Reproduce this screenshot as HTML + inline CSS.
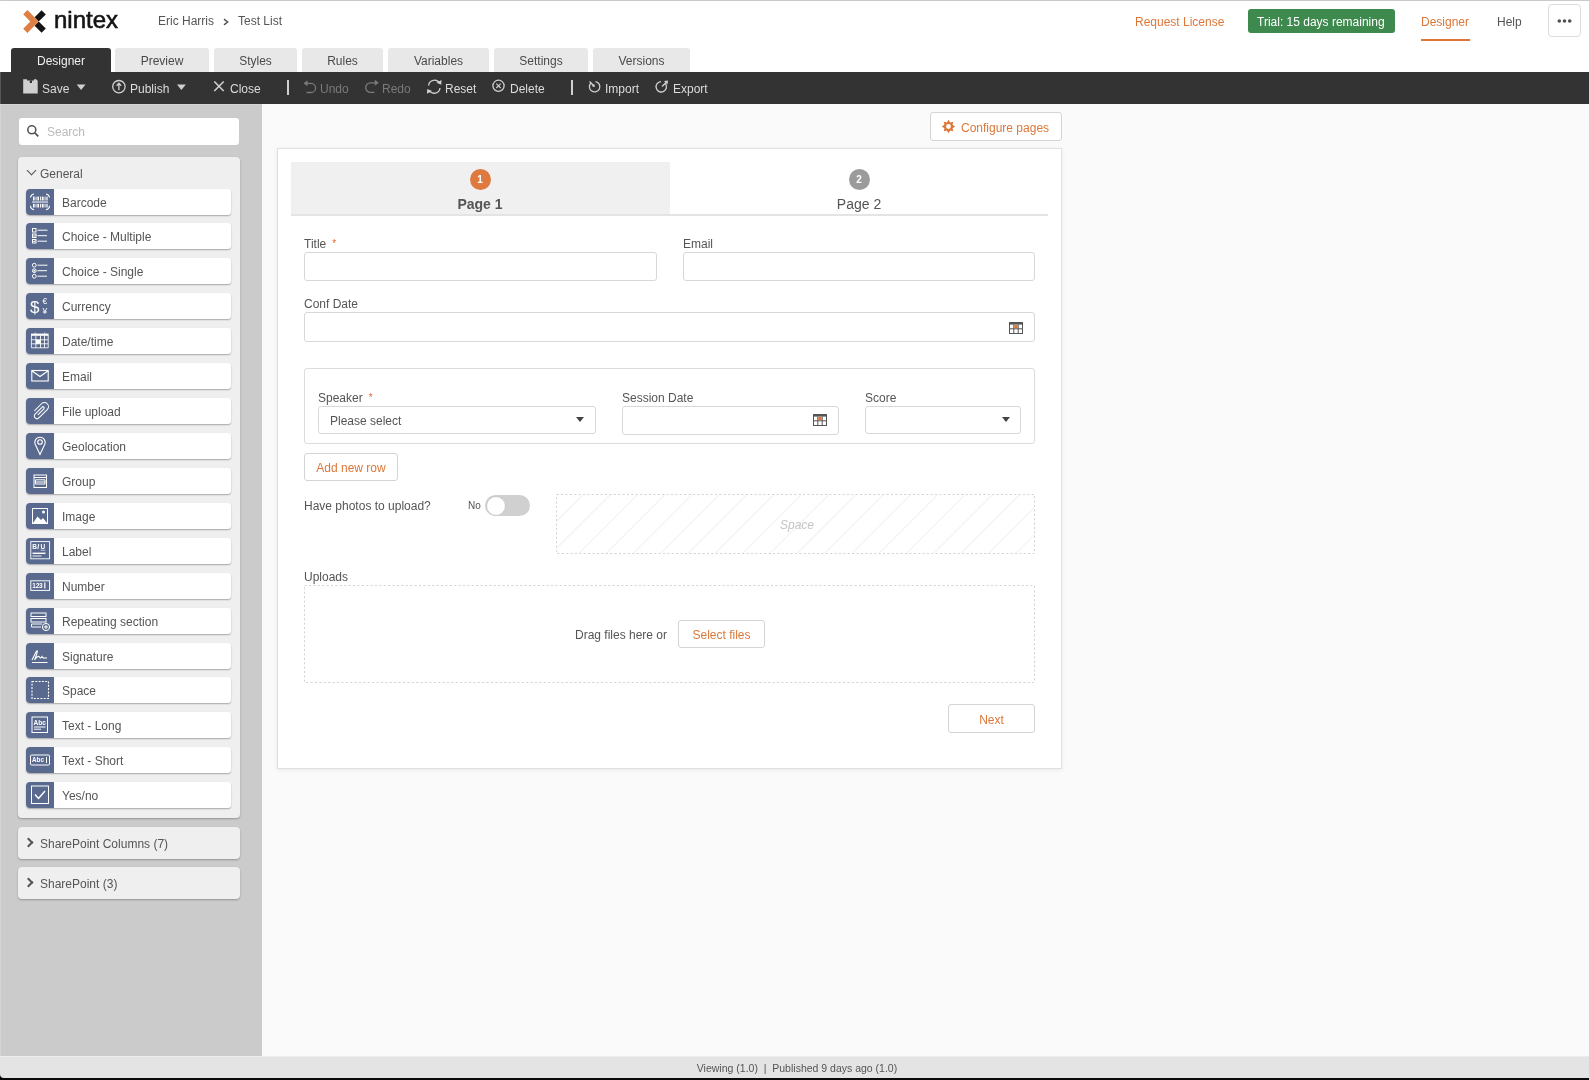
<!DOCTYPE html>
<html><head><meta charset="utf-8">
<style>
*{box-sizing:border-box;margin:0;padding:0}
html,body{width:1589px;height:1080px;overflow:hidden;background:#fafafa;font-family:"Liberation Sans",sans-serif;font-size:12px;color:#555}
.a{position:absolute}
.t{position:absolute;white-space:nowrap;line-height:14px;height:14px}
#topline{left:0;top:0;width:1589px;height:1px;background:#c9c9c9}
#header{left:0;top:1px;width:1589px;height:71px;background:#fff}
.tab{position:absolute;top:48px;height:24px;background:#e8e8e8;border-radius:3px 3px 0 0;text-align:center;line-height:27px;color:#4a4a4a;font-size:12px}
.tab.on{background:#333;color:#f0f0f0}
#toolbar{left:0;top:72px;width:1589px;height:32px;background:#333}
.tb{position:absolute;top:82px;height:14px;line-height:14px;color:#dcdcdc;font-size:12px;white-space:nowrap}
.tb.dis{color:#7a7a7a}
#sidebar{left:0;top:104px;width:262px;height:952px;background:#cbcbcb}
#footer{left:0;top:1056px;width:1589px;height:22px;padding-left:5px;background:#e4e4e4;border-top:1px solid #ececec;border-radius:0 0 0 4px;text-align:center;line-height:22px;font-size:10.5px;color:#555}
#bottom{left:0;top:1070px;width:1589px;height:10px;background:#0a0a0a}

.panel{position:absolute;left:18px;width:222px;background:#efefef;border-radius:4px;box-shadow:0 1px 2px rgba(0,0,0,.28)}
.item{position:absolute;left:26px;width:205px;height:26px;background:#fff;border-radius:4px 3px 3px 4px;box-shadow:0 1px 1.5px rgba(0,0,0,.3);overflow:hidden}
.item .ic{position:absolute;left:0;top:0;width:28px;height:26px;background:#596a8e}
.item span{position:absolute;left:36px;top:7px;line-height:14px;color:#555;font-size:12px;white-space:nowrap}
.chev{position:absolute;width:7px;height:7px;border-right:1.7px solid #555;border-bottom:1.7px solid #555}

.inp{position:absolute;background:#fff;border:1px solid #d8d8d8;border-radius:3px}
.lbl{position:absolute;white-space:nowrap;line-height:14px;height:14px;color:#555;font-size:12px}
.req{color:#dc6a2c;font-size:10px;margin-left:6px;position:relative;top:-1.5px}
.btn{position:absolute;background:#fff;border:1px solid #d4d4d4;border-radius:3px;color:#dc7738;font-size:12px;text-align:center;white-space:nowrap}
.caret{position:absolute;width:0;height:0;border-left:4.5px solid transparent;border-right:4.5px solid transparent;border-top:5px solid #444}
</style></head><body><div id="wrap" style="position:absolute;left:0;top:0;width:1589px;height:1080px;will-change:transform">
<div class="a" id="topline"></div>
<div class="a" id="header"></div>

<!-- logo -->
<svg class="a" style="left:0;top:0" width="50" height="40" viewBox="0 0 50 40">
  <path d="M41.6 10.3 L45.8 14.5 L38.7 21.5 L34.6 17.3 Z" fill="#141414"/>
  <path d="M41.6 32.7 L45.8 28.5 L38.7 21.5 L34.6 25.7 Z" fill="#141414"/>
  <path d="M27.4 10.1 L38.7 21.5 L27.4 32.9 L23.2 28.7 L30.3 21.5 L23.2 14.3 Z" fill="#de8046"/>
</svg>
<div class="t" style="left:54px;top:6px;font-size:24px;line-height:28px;height:28px;color:#141414;-webkit-text-stroke:0.6px #141414">nintex</div>

<div class="t" style="left:158px;top:14px;color:#555">Eric Harris</div>
<svg class="a" style="left:222px;top:18px" width="8" height="8" viewBox="0 0 8 8"><path d="M2 1.2 L5.6 4 L2 6.8" fill="none" stroke="#555" stroke-width="1.5"/></svg>
<div class="t" style="left:238px;top:14px;color:#555">Test List</div>

<div class="t" style="left:1135px;top:15px;color:#dc7738">Request License</div>
<div class="a" style="left:1248px;top:9px;width:147px;height:24px;background:#3e8a4e;border-radius:3px"></div>
<div class="t" style="left:1257px;top:15px;color:#fff">Trial: 15 days remaining</div>
<div class="t" style="left:1421px;top:15px;color:#dc7738">Designer</div>
<div class="a" style="left:1421px;top:39px;width:49px;height:2px;background:#dc7738"></div>
<div class="t" style="left:1497px;top:15px;color:#555">Help</div>
<div class="a" style="left:1548px;top:4px;width:33px;height:33px;border:1px solid #ddd;border-radius:4px;background:#fff"></div>
<svg class="a" style="left:1550px;top:14px" width="30" height="14" viewBox="0 0 30 14"><circle cx="9.3" cy="7" r="1.8" fill="#505050"/><circle cx="14.5" cy="7" r="1.8" fill="#505050"/><circle cx="19.7" cy="7" r="1.8" fill="#505050"/></svg>

<!-- tabs -->
<div class="tab on" style="left:11px;width:100px">Designer</div>
<div class="tab" style="left:115px;width:94px">Preview</div>
<div class="tab" style="left:214px;width:83px">Styles</div>
<div class="tab" style="left:302px;width:81px">Rules</div>
<div class="tab" style="left:388px;width:101px">Variables</div>
<div class="tab" style="left:494px;width:94px">Settings</div>
<div class="tab" style="left:593px;width:97px">Versions</div>

<div class="a" id="toolbar"></div>
<svg class="a" style="left:0;top:72px" width="720" height="32" viewBox="0 72 720 32">
<g fill="#d0d0d0">
 <path d="M23.2 79.2 H27 V80.4 H34 V79.2 H36.2 L37.7 80.7 V93.5 H23.2 Z"/>
 <rect x="29.8" y="80.4" width="2.2" height="2.6" fill="#333"/>
 <path d="M76.7 84.4 H85.5 L81.1 89.9 Z"/>
 <path d="M177 84.4 H185.8 L181.4 89.9 Z"/>
</g>
<g fill="none" stroke="#d0d0d0" stroke-width="1.3">
 <circle cx="118.9" cy="86.7" r="6.2"/>
 <path d="M118.9 90.3 V83.5 M116.6 85.8 L118.9 83.3 L121.2 85.8"/>
 <path d="M214.3 81.5 L223.7 91 M223.7 81.5 L214.3 91" stroke-width="1.6"/>
 <circle cx="498.5" cy="85.8" r="5.6"/>
 <path d="M496.3 83.6 L500.7 88 M500.7 83.6 L496.3 88" stroke-width="1.1"/>
 <path d="M589.5 81.5 L594.3 86.3"/>
 <path d="M591 83 A5.2 5.2 0 1 0 595.5 81.6"/>
 <path d="M667 81.5 L662 86.5"/>
 <path d="M665.3 83.5 A5.2 5.2 0 1 1 661 81.6"/>
 <path d="M428.6 85.5 A5.8 5.8 0 0 1 439.5 83.3"/>
 <path d="M440 88 A5.8 5.8 0 0 1 429.2 90.3"/>
</g>
<g fill="#d0d0d0">
 <path d="M594.9 87 L591.8 86.2 L594.1 83.8 Z"/>
 <path d="M668 80.5 L667.5 84.6 L664 81 Z"/>
 <path d="M436.5 82.8 L441.3 84.8 L441.5 80 Z"/>
 <path d="M432 91 L427.2 89 L427 93.7 Z"/>
 <rect x="287" y="80" width="2" height="15" fill="#cfcfcf"/>
 <rect x="571" y="80" width="2" height="15" fill="#cfcfcf"/>
</g>
<g fill="none" stroke="#7a7a7a" stroke-width="1.3">
 <path d="M306 83.3 H311 A4.6 4.6 0 0 1 311 92.5 H306.5"/>
 <path d="M375.5 82.8 H370.5 A4.8 4.8 0 0 0 370.5 92.4 H374.5"/>
</g>
<g fill="#7a7a7a">
 <path d="M303.5 83.3 L307.5 80.3 V86.3 Z"/>
 <path d="M378.8 82.8 L374.8 79.8 V85.8 Z"/>
</g>
</svg>
<div class="tb" style="left:42px">Save</div>
<div class="tb" style="left:130px">Publish</div>
<div class="tb" style="left:230px">Close</div>
<div class="tb dis" style="left:320px">Undo</div>
<div class="tb dis" style="left:382px">Redo</div>
<div class="tb" style="left:445px">Reset</div>
<div class="tb" style="left:510px">Delete</div>
<div class="tb" style="left:605px">Import</div>
<div class="tb" style="left:673px">Export</div>

<div class="a" id="sidebar"></div>
<div class="a" style="left:19px;top:118px;width:220px;height:27px;background:#fff;border-radius:3px"></div>
<svg class="a" style="left:26px;top:124px" width="14" height="14" viewBox="0 0 14 14"><circle cx="5.8" cy="5.8" r="4" fill="none" stroke="#555" stroke-width="1.6"/><path d="M8.8 8.8 L12.3 12.3" stroke="#555" stroke-width="1.8"/></svg>
<div class="t" style="left:47px;top:125px;color:#bbb">Search</div>
<div class="panel" style="top:157px;height:661px"></div>
<div class="chev" style="left:28px;top:167px;transform:rotate(45deg)"></div>
<div class="t" style="left:40px;top:167px;color:#555">General</div>
<div class="item" style="top:188.5px"><svg class="ic" width="28" height="26" viewBox="0 0 28 26"><g fill="none" stroke="#fff" stroke-width="1.1">
<path d="M4.5 8.5 A4 4 0 0 1 8 5"/><path d="M20 5 A4 4 0 0 1 23.5 8.5"/>
<path d="M4.5 16.8 A4 4 0 0 0 8 20.6"/><path d="M20 20.6 A4 4 0 0 0 23.5 16.8"/>
<path d="M6 13 H22"/></g>
<g fill="#fff"><rect x="7" y="7.6" width="1.6" height="3.9"/><rect x="9.6" y="7.6" width="0.9" height="3.9"/><rect x="11.4" y="7.6" width="1.6" height="3.9"/><rect x="14" y="7.6" width="0.9" height="3.9"/><rect x="15.8" y="7.6" width="1.8" height="3.9"/><rect x="18.6" y="7.6" width="0.9" height="3.9"/><rect x="20.4" y="7.6" width="1.2" height="3.9"/>
<rect x="7" y="14.8" width="1.6" height="3.7"/><rect x="9.6" y="14.8" width="0.9" height="3.7"/><rect x="11.4" y="14.8" width="1.6" height="3.7"/><rect x="14" y="14.8" width="0.9" height="3.7"/><rect x="15.8" y="14.8" width="1.8" height="3.7"/><rect x="18.6" y="14.8" width="0.9" height="3.7"/><rect x="20.4" y="14.8" width="1.2" height="3.7"/></g></svg><span>Barcode</span></div>
<div class="item" style="top:223.4px"><svg class="ic" width="28" height="26" viewBox="0 0 28 26"><g fill="none" stroke="#fff" stroke-width="1"><rect x="6.5" y="5.5" width="3.5" height="3.5"/><rect x="6.5" y="11" width="3.5" height="3.5"/><rect x="6.5" y="16.5" width="3.5" height="3.5"/>
<path d="M11.5 7.2 H21.5 M11.5 12.7 H21 M11.5 18.2 H21"/><path d="M7.3 12.5 L8.2 13.5 L9.6 11.6 M7.3 18 L8.2 19 L9.6 17.1" stroke-width="0.9"/></g></svg><span>Choice - Multiple</span></div>
<div class="item" style="top:258.3px"><svg class="ic" width="28" height="26" viewBox="0 0 28 26"><g fill="none" stroke="#fff" stroke-width="1"><circle cx="8.3" cy="7.2" r="1.9"/><circle cx="8.3" cy="12.7" r="1.9"/><circle cx="8.3" cy="18.2" r="1.9"/>
<path d="M11.5 7.2 H21.5 M11.5 12.7 H21 M11.5 18.2 H21"/></g><circle cx="8.3" cy="12.7" r="1" fill="#fff"/></svg><span>Choice - Single</span></div>
<div class="item" style="top:293.3px"><svg class="ic" width="28" height="26" viewBox="0 0 28 26"><text x="4" y="20" font-family="Liberation Sans" font-size="17" fill="#fff">$</text><text x="16.5" y="11" font-family="Liberation Sans" font-size="8.5" fill="#fff">€</text><text x="16.5" y="20.5" font-family="Liberation Sans" font-size="8.5" fill="#fff">¥</text></svg><span>Currency</span></div>
<div class="item" style="top:328.2px"><svg class="ic" width="28" height="26" viewBox="0 0 28 26"><rect x="5" y="5.6" width="17.6" height="2.2" fill="#fff"/><path d="M9.2 4.3 L10 5.8 H8.4 Z M18.6 4.3 L19.4 5.8 H17.8 Z" fill="#fff"/><g fill="none" stroke="#fff" stroke-width="0.85"><path d="M5.4 7.5 V19.8 H22.2 V7.5 M5.4 11.8 H22.2 M5.4 15.8 H22.2 M9.9 7.5 V19.8 M14.5 7.5 V19.8 M18.5 7.5 V19.8"/></g><rect x="9.9" y="11.8" width="4.6" height="4" fill="#fff"/></svg><span>Date/time</span></div>
<div class="item" style="top:363.1px"><svg class="ic" width="28" height="26" viewBox="0 0 28 26"><g fill="none" stroke="#fff" stroke-width="1.1"><rect x="5.8" y="7.5" width="16.4" height="10.5"/><path d="M5.8 7.8 L14 13.5 L22.2 7.8"/></g></svg><span>Email</span></div>
<div class="item" style="top:398.0px"><svg class="ic" width="28" height="26" viewBox="0 0 28 26"><g fill="none" stroke="#fff" stroke-width="1.1" transform="translate(14 13) rotate(45) scale(0.95)"><path d="M1.3 4.5 V-4.5 A1.3 1.3 0 0 0 -1.3 -4.5 V6 A2.8 2.8 0 0 0 4.3 6 V-6.5 A4.3 4.3 0 0 0 -4.3 -6.5 V4"/></g></svg><span>File upload</span></div>
<div class="item" style="top:432.9px"><svg class="ic" width="28" height="26" viewBox="0 0 28 26"><g fill="none" stroke="#fff" stroke-width="1.1"><path d="M14 21.5 L9.3 11.5 Q8.5 9.5 9 8 Q10.3 4.2 14 4.2 Q17.7 4.2 19 8 Q19.5 9.5 18.7 11.5 Z"/><circle cx="14" cy="9" r="2.3"/></g></svg><span>Geolocation</span></div>
<div class="item" style="top:467.9px"><svg class="ic" width="28" height="26" viewBox="0 0 28 26"><g fill="none" stroke="#fff" stroke-width="1"><rect x="8" y="7" width="12.5" height="12.5"/><path d="M8 9.5 H20.5 M9.5 11.8 H19 V16 H9.5 Z M9.5 14 H19"/></g></svg><span>Group</span></div>
<div class="item" style="top:502.8px"><svg class="ic" width="28" height="26" viewBox="0 0 28 26"><g fill="none" stroke="#fff" stroke-width="1"><rect x="6.5" y="5.5" width="15" height="15"/></g><path d="M7 20 L11.5 13.5 L15 17 L17 15 L21 20 Z" fill="#fff"/><circle cx="17.5" cy="9" r="1.5" fill="#fff"/></svg><span>Image</span></div>
<div class="item" style="top:537.7px"><svg class="ic" width="28" height="26" viewBox="0 0 28 26"><g fill="none" stroke="#fff" stroke-width="0.9"><rect x="4.8" y="3.6" width="18.8" height="17.2"/><path d="M6.5 18 H15.5"/></g><rect x="6.5" y="14.6" width="13" height="1.4" fill="#fff"/><text x="6.3" y="10.8" font-family="Liberation Sans" font-size="6.5" font-weight="bold" fill="#fff">B</text><text x="11.2" y="10.8" font-family="Liberation Sans" font-size="6.5" font-style="italic" font-weight="bold" fill="#fff">I</text><text x="14.6" y="10.8" font-family="Liberation Sans" font-size="6.5" font-weight="bold" text-decoration="underline" fill="#fff">U</text></svg><span>Label</span></div>
<div class="item" style="top:572.6px"><svg class="ic" width="28" height="26" viewBox="0 0 28 26"><g fill="none" stroke="#fff" stroke-width="0.95"><rect x="4.8" y="7.8" width="18.8" height="9.6"/><path d="M18.8 9.6 V15.6" stroke-width="1.2"/></g><text x="6.2" y="15.2" font-family="Liberation Sans" font-size="6.6" font-weight="bold" fill="#fff" letter-spacing="-0.2">123</text></svg><span>Number</span></div>
<div class="item" style="top:607.5px"><svg class="ic" width="28" height="26" viewBox="0 0 28 26"><g fill="none" stroke="#fff" stroke-width="1"><rect x="5" y="5" width="15" height="3.5"/><rect x="5" y="10.5" width="15" height="3.5"/><path d="M5.5 16 H16 M5.5 16 V19 H15"/><circle cx="20" cy="19" r="3.6" fill="#5a6a8c"/><path d="M20 16.8 V21.2 M17.8 19 H22.2"/></g></svg><span>Repeating section</span></div>
<div class="item" style="top:642.5px"><svg class="ic" width="28" height="26" viewBox="0 0 28 26"><g fill="none" stroke="#fff" stroke-width="1.1"><path d="M6 17 Q8 13 10 9 Q12 6 11 10 Q10 14 8.5 17 Q12 12 13.5 14 Q14.5 16 16 13.5 Q17 15.5 19 15 H21"/><path d="M6 19.5 H21.5"/></g></svg><span>Signature</span></div>
<div class="item" style="top:677.4px"><svg class="ic" width="28" height="26" viewBox="0 0 28 26"><g fill="none" stroke="#fff" stroke-width="1.1" stroke-dasharray="2 1.3"><rect x="6" y="4.5" width="16.5" height="17"/></g></svg><span>Space</span></div>
<div class="item" style="top:712.3px"><svg class="ic" width="28" height="26" viewBox="0 0 28 26"><g fill="none" stroke="#fff" stroke-width="1"><rect x="6" y="5" width="15.5" height="15.5"/><path d="M8 15 H19.5 M8 17.2 H15"/></g><text x="7.5" y="12.5" font-family="Liberation Sans" font-size="6.5" font-weight="bold" fill="#fff">Abc</text></svg><span>Text - Long</span></div>
<div class="item" style="top:747.2px"><svg class="ic" width="28" height="26" viewBox="0 0 28 26"><g fill="none" stroke="#fff" stroke-width="1"><rect x="4.5" y="8" width="19" height="10" rx="1"/><path d="M20.5 10 V16"/></g><text x="6" y="15.3" font-family="Liberation Sans" font-size="6.3" font-weight="bold" fill="#fff">Abc</text></svg><span>Text - Short</span></div>
<div class="item" style="top:782.1px"><svg class="ic" width="28" height="26" viewBox="0 0 28 26"><g fill="none" stroke="#fff" stroke-width="1"><rect x="5.5" y="4" width="17" height="17.5"/><path d="M9 12.5 L12.5 16.5 L19 9" stroke-width="1.4"/></g></svg><span>Yes/no</span></div>
<div class="panel" style="top:827px;height:32px"></div>
<div class="chev" style="left:25px;top:839px;transform:rotate(-45deg);border-width:2px"></div>
<div class="t" style="left:40px;top:837px;color:#555">SharePoint Columns (7)</div>
<div class="panel" style="top:867px;height:32px"></div>
<div class="chev" style="left:25px;top:879px;transform:rotate(-45deg);border-width:2px"></div>
<div class="t" style="left:40px;top:877px;color:#555">SharePoint (3)</div>



<!-- canvas -->
<div class="btn" style="left:930px;top:112px;width:132px;height:29px;line-height:30px;text-align:left;padding-left:30px">Configure pages</div>
<svg class="a" style="left:941px;top:118.5px" width="15" height="15" viewBox="0 0 15 15"><path d="M7.50 0.80 L9.18 3.43 L12.24 2.76 L11.57 5.82 L14.20 7.50 L11.57 9.18 L12.24 12.24 L9.18 11.57 L7.50 14.20 L5.82 11.57 L2.76 12.24 L3.43 9.18 L0.80 7.50 L3.43 5.82 L2.76 2.76 L5.82 3.43 Z" fill="#dc7738"/><circle cx="7.5" cy="7.5" r="2.4" fill="#fff"/></svg>

<div class="a" style="left:277px;top:148px;width:785px;height:621px;background:#fff;border:1px solid #e0e0e0;box-shadow:0 1px 4px rgba(0,0,0,.07)"></div>
<div class="a" style="left:291px;top:162px;width:379px;height:53px;background:#f0f0f0"></div>
<div class="a" style="left:291px;top:214px;width:757px;height:2px;background:#e4e4e4"></div>
<div class="a" style="left:469.5px;top:169px;width:21px;height:21px;border-radius:50%;background:#de7a3f;color:#fff;font-weight:bold;font-size:10px;line-height:21px;text-align:center">1</div>
<div class="a" style="left:848.5px;top:169px;width:21px;height:21px;border-radius:50%;background:#9b9b9b;color:#fff;font-weight:bold;font-size:10px;line-height:21px;text-align:center">2</div>
<div class="t" style="left:380px;width:200px;text-align:center;top:196px;height:16px;line-height:16px;font-size:14px;font-weight:bold;color:#555">Page 1</div>
<div class="t" style="left:759px;width:200px;text-align:center;top:196px;height:16px;line-height:16px;font-size:14px;color:#555">Page 2</div>

<div class="lbl" style="left:304px;top:237px">Title<span class="req">*</span></div>
<div class="inp" style="left:304px;top:252px;width:353px;height:29px"></div>
<div class="lbl" style="left:683px;top:237px">Email</div>
<div class="inp" style="left:683px;top:252px;width:352px;height:29px"></div>
<div class="lbl" style="left:304px;top:297px">Conf Date</div>
<div class="inp" style="left:304px;top:312px;width:731px;height:30px"></div>
<div class="a" style="left:1009px;top:322px;width:14px;height:12px"><svg width="14" height="12" viewBox="0 0 14 12"><rect x="0.5" y="0.5" width="13" height="11" fill="#fff" stroke="#555" stroke-width="1"/><rect x="0" y="0" width="14" height="2.6" fill="#555"/><path d="M0.5 6.8 H13.5 M4.8 2.5 V11.5 M9.2 2.5 V11.5" stroke="#555" stroke-width="1"/><rect x="5.3" y="3" width="3.4" height="3.3" fill="#dc7738"/></svg></div>

<div class="a" style="left:304px;top:368px;width:731px;height:76px;border:1px solid #dcdcdc;border-radius:3px"></div>
<div class="lbl" style="left:318px;top:391px">Speaker<span class="req">*</span></div>
<div class="inp" style="left:318px;top:406px;width:278px;height:28px"></div>
<div class="t" style="left:330px;top:414px;color:#555">Please select</div>
<div class="caret" style="left:576px;top:417px"></div>
<div class="lbl" style="left:622px;top:391px">Session Date</div>
<div class="inp" style="left:622px;top:406px;width:217px;height:29px"></div>
<div class="a" style="left:813px;top:414px;width:14px;height:12px"><svg width="14" height="12" viewBox="0 0 14 12"><rect x="0.5" y="0.5" width="13" height="11" fill="#fff" stroke="#555" stroke-width="1"/><rect x="0" y="0" width="14" height="2.6" fill="#555"/><path d="M0.5 6.8 H13.5 M4.8 2.5 V11.5 M9.2 2.5 V11.5" stroke="#555" stroke-width="1"/><rect x="5.3" y="3" width="3.4" height="3.3" fill="#dc7738"/></svg></div>
<div class="lbl" style="left:865px;top:391px">Score</div>
<div class="inp" style="left:865px;top:406px;width:156px;height:28px"></div>
<div class="caret" style="left:1002px;top:417px"></div>

<div class="btn" style="left:304px;top:453px;width:94px;height:28px;line-height:29px">Add new row</div>
<div class="lbl" style="left:304px;top:499px">Have photos to upload?</div>
<div class="t" style="left:468px;top:500px;font-size:10px;line-height:12px;height:12px;color:#555">No</div>
<div class="a" style="left:485px;top:495px;width:45px;height:21px;border-radius:11px;background:#d0d0d0"></div>
<div class="a" style="left:485.5px;top:495.5px;width:20px;height:20px;border-radius:50%;background:#fff;border:1px solid #c8c8c8"></div>
<svg class="a" style="left:556px;top:494px" width="479" height="60" viewBox="0 0 479 60"><defs><clipPath id="cp"><rect x="1" y="1" width="477" height="58"/></clipPath></defs><path clip-path="url(#cp)" d="M-141.6 60 L-81.6 0 M-114.3 60 L-54.3 0 M-87.0 60 L-27.0 0 M-59.7 60 L0.3 0 M-32.4 60 L27.6 0 M-5.1 60 L54.9 0 M22.2 60 L82.2 0 M49.5 60 L109.5 0 M76.8 60 L136.8 0 M104.1 60 L164.1 0 M131.4 60 L191.4 0 M158.7 60 L218.7 0 M186.0 60 L246.0 0 M213.3 60 L273.3 0 M240.6 60 L300.6 0 M267.9 60 L327.9 0 M295.2 60 L355.2 0 M322.5 60 L382.5 0 M349.8 60 L409.8 0 M377.1 60 L437.1 0 M404.4 60 L464.4 0 M431.7 60 L491.7 0 M459.0 60 L519.0 0 M486.3 60 L546.3 0 M513.6 60 L573.6 0 M540.9 60 L600.9 0 M568.2 60 L628.2 0 M595.5 60 L655.5 0 M622.8 60 L682.8 0 M650.1 60 L710.1 0 M677.4 60 L737.4 0 M704.7 60 L764.7 0 M732.0 60 L792.0 0 M759.3 60 L819.3 0" stroke="#f2f2f2" stroke-width="1.1" fill="none"/><rect x="0.5" y="0.5" width="478" height="59" fill="none" stroke="#d4d4d4" stroke-dasharray="2.2 2.2"/></svg>
<div class="t" style="left:697px;width:200px;text-align:center;top:518px;font-style:italic;color:#c4c4c4">Space</div>

<div class="lbl" style="left:304px;top:570px">Uploads</div>
<svg class="a" style="left:304px;top:585px" width="731" height="98" viewBox="0 0 731 98"><rect x="0.5" y="0.5" width="730" height="97" fill="none" stroke="#d4d4d4" stroke-dasharray="2.2 2.2"/></svg>
<div class="t" style="left:575px;top:628px;color:#555">Drag files here or</div>
<div class="btn" style="left:678px;top:620px;width:87px;height:28px;line-height:28px">Select files</div>
<div class="btn" style="left:948px;top:704px;width:87px;height:29px;line-height:30px">Next</div>

<div class="a" style="left:0;top:104px;width:262px;height:1px;background:#d3d3d3"></div>
<div class="a" style="left:0;top:0;width:1px;height:1078px;background:rgba(255,255,255,.18)"></div>
<div class="a" id="bottom"></div>
<div class="a" id="footer">Viewing (1.0) &nbsp;|&nbsp; Published 9 days ago (1.0)</div>

</div></body></html>
